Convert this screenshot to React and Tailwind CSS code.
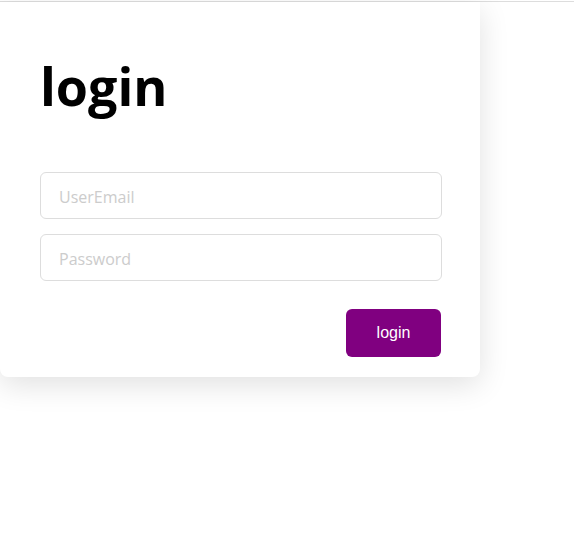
import React, { useState } from 'react';

const App = () => {
  const [email, setEmail] = useState('');
  const [password, setPassword] = useState('');

  return (
    <div className="min-h-screen bg-white font-['Open_Sans',sans-serif]">
      <div className="h-[2px] border-b border-[#dddddd]" />
      <div className="w-[480px] bg-white rounded-b-lg shadow-[0_8px_30px_rgba(0,0,0,0.12)] px-10 pt-[49px] pb-[20px]">
        <h1 className="text-[52px] font-bold leading-[70px] text-black font-['Open_Sans',sans-serif]">login</h1>

        <div className="mt-[51px] flex flex-col gap-[15px]">
          <input
            type="text"
            placeholder="UserEmail"
            value={email}
            onChange={(e) => setEmail(e.target.value)}
            className="w-[402px] h-[47px] pl-[18px] pr-4 pt-[3px] border border-[#dddddd] rounded-md text-base placeholder:text-[#cccccc] focus:outline-none"
          />
          <input
            type="password"
            placeholder="Password"
            value={password}
            onChange={(e) => setPassword(e.target.value)}
            className="w-[402px] h-[47px] pl-[18px] pr-4 pt-[3px] border border-[#dddddd] rounded-md text-base placeholder:text-[#cccccc] focus:outline-none"
          />
        </div>

        <div className="mt-[28px] flex justify-end w-[401px]">
          <button className="w-[95px] h-[48px] bg-[#800080] text-white rounded-md text-base font-['Liberation_Sans',Arial,sans-serif]">
            login
          </button>
        </div>
      </div>
    </div>
  );
};

export default App;
